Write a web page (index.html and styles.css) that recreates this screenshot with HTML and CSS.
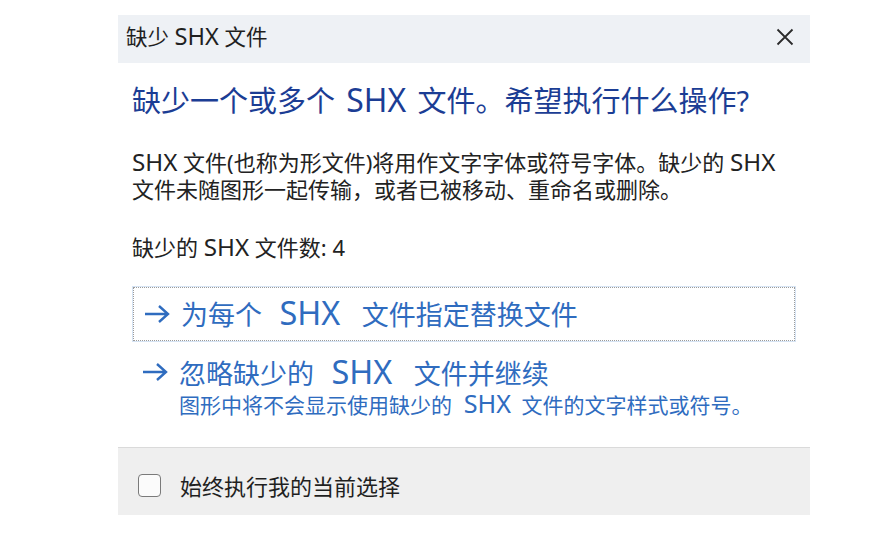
FILE: index.html
```html
<!DOCTYPE html>
<html lang="zh-CN">
<head>
<meta charset="utf-8">
<title>缺少 SHX 文件</title>
<link rel="stylesheet" href="styles.css">
</head>
<body>
<div class="dialog">
  <div class="titlebar">
    <span class="title">缺少 <span class="lat">SHX</span> 文件</span>
    <svg class="close" width="18" height="18" viewBox="0 0 18 18"><path d="M1.5 1.5 L16.5 16.5 M16.5 1.5 L1.5 16.5" stroke="#2b2b2b" stroke-width="1.8" fill="none"/></svg>
  </div>
  <div class="content">
    <h1 class="heading">缺少一个或多个 <span class="lat">SHX</span> 文件。希望执行什么操作?</h1>
    <p class="desc"><span class="lat">SHX</span> 文件(也称为形文件)将用作文字字体或符号字体。缺少的 <span class="lat">SHX</span><br>文件未随图形一起传输，或者已被移动、重命名或删除。</p>
    <p class="count">缺少的 <span class="lat">SHX</span> 文件数: 4</p>
    <div class="option focused">
      <svg class="arrow" width="26" height="20" viewBox="0 0 26 20"><path d="M1 10 H24 M15 2 L24 10 L15 18" stroke="#2f6cbf" stroke-width="2.4" fill="none" stroke-linejoin="miter"/></svg>
      <div class="option-text">
        <div class="option-title">为每个 <span class="lat">SHX</span> 文件指定替换文件</div>
      </div>
    </div>
    <div class="option second">
      <svg class="arrow" width="26" height="20" viewBox="0 0 26 20"><path d="M1 10 H24 M15 2 L24 10 L15 18" stroke="#2f6cbf" stroke-width="2.4" fill="none" stroke-linejoin="miter"/></svg>
      <div class="option-text">
        <div class="option-title">忽略缺少的 <span class="lat">SHX</span> 文件并继续</div>
        <div class="option-sub">图形中将不会显示使用缺少的 <span class="lat">SHX</span> 文件的文字样式或符号。</div>
      </div>
    </div>
  </div>
  <div class="footer">
    <span class="checkbox"></span>
    <span class="check-label">始终执行我的当前选择</span>
  </div>
</div>
</body>
</html>
```

FILE: styles.css
```css
html, body {
  margin: 0;
  padding: 0;
  background: #ffffff;
}

body {
  font-family: "Noto Sans", "Noto Sans CJK SC", sans-serif;
  color: #222222;
}

.dialog {
  margin: 15px 0 0 118px;
  width: 692px;
  background: #ffffff;
}

.titlebar {
  height: 48px;
  background: #eef1f5;
  display: flex;
  align-items: center;
  justify-content: space-between;
  padding: 0 16px 0 8px;
  box-sizing: border-box;
}

.title {
  font-size: 21.5px;
  line-height: 26px;
  color: #1f1f1f;
  margin-top: -4px;
}

.close {
  display: block;
  margin-top: -4px;
}

.content {
  padding: 20px 14px 0 14px;
}

.heading {
  margin: 0;
  font-weight: normal;
  font-size: 29px;
  line-height: 36px;
  color: #1b3d94;
}

.desc {
  margin: 30px 0 0 0;
  font-size: 22px;
  line-height: 27px;
  color: #222222;
}

.count {
  margin: 31px 0 0 0;
  font-size: 22px;
  line-height: 27px;
  color: #222222;
}

.lat {
  font-size: 1.1em;
  line-height: 1;
}

.heading .lat {
  margin: 0 0.12em;
}

.option {
  display: flex;
  align-items: flex-start;
  padding: 0 10px;
  color: #2f6cbf;
}

.option.focused {
  margin-top: 26px;
  height: 52px;
  align-items: center;
  border: 1px dotted #9a9a9a;
  outline: 1px solid #d6e4f4;
  margin-left: 1px;
  margin-right: 1px;
}

.option.second {
  margin-top: 14px;
}

.arrow {
  flex: none;
  margin-right: 11px;
}

.option.second .arrow {
  margin-top: 7px;
}

.option-title {
  font-size: 27px;
  line-height: 34px;
}

.option-title .lat {
  font-size: 1.2em;
  margin: 0 0.45em 0 0.32em;
}

.option-sub {
  font-size: 21px;
  line-height: 28px;
}

.option-sub .lat {
  font-size: 1.2em;
  margin: 0 0.2em 0 0.25em;
}

.footer {
  margin-top: 28px;
  height: 68px;
  background: #efefef;
  border-top: 1px solid #dadada;
  display: flex;
  align-items: center;
  padding: 8px 0 0 20px;
  box-sizing: border-box;
}

.checkbox {
  width: 21px;
  height: 21px;
  border: 1.5px solid #7a7a7a;
  border-radius: 4px;
  background: #fbfbfb;
  flex: none;
}

.check-label {
  margin-left: 19px;
  font-size: 22px;
  line-height: 28px;
  color: #1f1f1f;
}
```
